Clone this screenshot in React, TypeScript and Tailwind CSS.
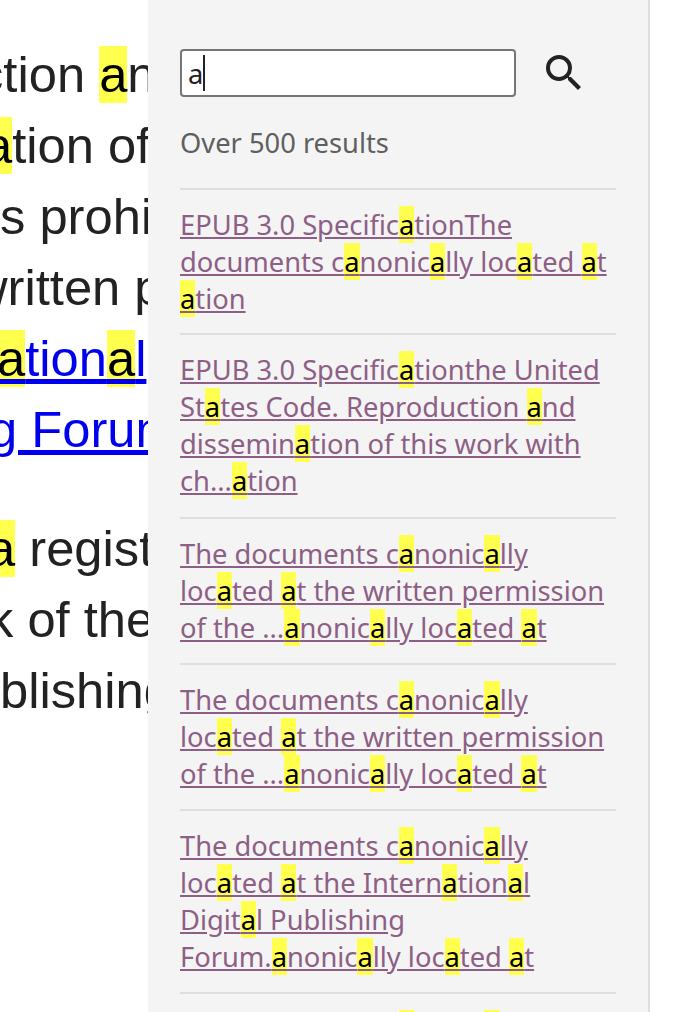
const results = [
  "EPUB 3.0 SpecificationThe documents canonically located at ation",
  "EPUB 3.0 Specificationthe United States Code. Reproduction and dissemination of this work with ch...ation",
  "The documents canonically located at the written permission of the ...anonically located at",
  "The documents canonically located at the written permission of the ...anonically located at",
  "The documents canonically located at the International Digital Publishing Forum.anonically located at",
  "The documents canonically located at the written permission",
];

function Marked({ text }: { text: string }) {
  const parts = text.split("a");
  return (
    <>
      {parts.map((part, i) => (
        <span key={i}>
          {i > 0 && <mark className="bg-[#ffff4d] text-black">a</mark>}
          {part}
        </span>
      ))}
    </>
  );
}

export default function App() {
  return (
    <div className="flex h-[1012px] w-[680px] overflow-hidden bg-white">
      <main className="w-[148px] shrink-0 overflow-hidden whitespace-nowrap pt-[39px] font-['Liberation_Sans',Arial,sans-serif] text-[50.7px] leading-[71px] text-[#222]">
        <div className="-ml-[22px]"><Marked text="ction an" /></div>
        <div className="-ml-[16px]"><Marked text="ation of" /></div>
        <div className="ml-0">s prohibi</div>
        <div className="-ml-[29px]">written p</div>
        <div className="-ml-[3px] text-[#0000ee] underline"><Marked text="ational" /></div>
        <div className="-ml-[11px] text-[#0000ee] underline">g Forum</div>
        <div className="mt-[48px] -ml-[13px]"><Marked text="a regist" /></div>
        <div className="-ml-[12px]">k of the</div>
        <div className="ml-0">blishing</div>
      </main>
      <aside className="h-full w-[502px] shrink-0 overflow-hidden border-r-2 border-[#dedede] bg-[#f4f4f4] pl-[32px] pr-[32px] font-['Noto_Sans',sans-serif] text-[27.3px] leading-[37px]">
        <div className="flex h-[48px] mt-[49px] items-center">
          <div className="flex h-[48px] w-[336px] items-center rounded-[4px] border-2 border-[#767676] bg-white pl-[6px] text-[#222]">
            a<span className="h-[36px] w-[2px] bg-[#222]" />
          </div>
          <button className="ml-[24px] h-[48px] w-[48px]">
            <svg viewBox="0 0 24 24" className="h-[48px] w-[48px]" fill="#222">
              <path d="M15.5 14h-.79l-.28-.27A6.471 6.471 0 0 0 16 9.5 6.5 6.5 0 1 0 9.5 16c1.61 0 3.09-.59 4.23-1.57l.27.28v.79l5 4.99L20.49 19l-4.99-5zm-6 0C7.01 14 5 11.99 5 9.5S7.01 5 9.5 5 14 7.01 14 9.5 11.99 14 9.5 14z" />
            </svg>
          </button>
        </div>
        <p className="mt-[27px] mb-[27px] text-[#5f5f5f]">Over 500 results</p>
        <ul className="w-[436px]">
          {results.map((r, i) => (
            <li key={i} className="border-t-2 border-[#dedede] pt-[16px] pb-[17px] first:pb-[16px] [&:nth-child(2)]:pb-[18px]">
              <a href="#" className="text-[#8e5f85] underline">
                <Marked text={r} />
              </a>
            </li>
          ))}
        </ul>
      </aside>
    </div>
  );
}
